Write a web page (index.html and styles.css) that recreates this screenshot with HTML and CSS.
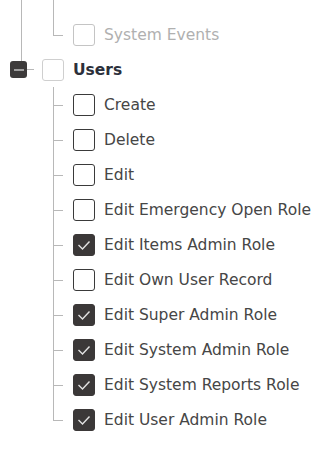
FILE: index.html
```html
<!DOCTYPE html>
<html lang="en">
<head>
<meta charset="utf-8">
<title>Permissions tree</title>
<link rel="stylesheet" href="styles.css">
</head>
<body>

<div class="tree">
  <div class="group top">
    <div class="row leaf last faded">
      <span class="box"></span>
      <span class="label">System Events</span>
    </div>
  </div>

  <div class="row node">
    <span class="toggle"><span class="minus"></span></span>
    <span class="box light"></span>
    <span class="label bold">Users</span>
  </div>

  <div class="group">
    <div class="row leaf"><span class="box"></span><span class="label">Create</span></div>
    <div class="row leaf"><span class="box"></span><span class="label">Delete</span></div>
    <div class="row leaf"><span class="box"></span><span class="label">Edit</span></div>
    <div class="row leaf"><span class="box"></span><span class="label">Edit Emergency Open Role</span></div>
    <div class="row leaf"><span class="box on"><svg viewBox="0 0 22 22"><polyline points="5.5,12 9.5,16 16.5,8.5"/></svg></span><span class="label">Edit Items Admin Role</span></div>
    <div class="row leaf"><span class="box"></span><span class="label">Edit Own User Record</span></div>
    <div class="row leaf"><span class="box on"><svg viewBox="0 0 22 22"><polyline points="5.5,12 9.5,16 16.5,8.5"/></svg></span><span class="label">Edit Super Admin Role</span></div>
    <div class="row leaf"><span class="box on"><svg viewBox="0 0 22 22"><polyline points="5.5,12 9.5,16 16.5,8.5"/></svg></span><span class="label">Edit System Admin Role</span></div>
    <div class="row leaf"><span class="box on"><svg viewBox="0 0 22 22"><polyline points="5.5,12 9.5,16 16.5,8.5"/></svg></span><span class="label">Edit System Reports Role</span></div>
    <div class="row leaf last"><span class="box on"><svg viewBox="0 0 22 22"><polyline points="5.5,12 9.5,16 16.5,8.5"/></svg></span><span class="label">Edit User Admin Role</span></div>
  </div>
</div>

</body>
</html>
```

FILE: styles.css
```css
body {
	margin: 0;
	background: #ffffff;
	font-family: "DejaVu Sans", Verdana, sans-serif;
	font-size: 15.5px;
	color: #464646;
}
.tree {
	position: relative;
}
.group {
	position: relative;
}
.top {
	padding-top: 17px;
}
/* line of the branch above, and the root line */
.top::before {
	content: "";
	position: absolute;
	left: 53px;
	top: 0;
	height: 17px;
	border-left: 1px solid #b8b8b8;
}
.top::after {
	content: "";
	position: absolute;
	left: 21px;
	top: 0;
	bottom: 0;
	border-left: 1px solid #b8b8b8;
}
.row {
	position: relative;
	height: 35px;
	display: flex;
	align-items: center;
	box-sizing: border-box;
}
.leaf {
	padding-left: 73px;
}
.leaf::before {
	content: "";
	position: absolute;
	left: 53px;
	top: 0;
	bottom: 0;
	border-left: 1px solid #b8b8b8;
}
.leaf.last::before {
	bottom: 50%;
}
.leaf::after {
	content: "";
	position: absolute;
	left: 53px;
	top: 50%;
	width: 10px;
	border-top: 1px solid #b8b8b8;
}
.node {
	padding-left: 10px;
}
.node::before {
	content: "";
	position: absolute;
	left: 21px;
	top: 0;
	height: 9px;
	border-left: 1px solid #b8b8b8;
}
.toggle {
	position: relative;
	width: 17px;
	height: 17px;
	margin-right: 15px;
	border-radius: 3px;
	background: #3d3b3b;
	display: flex;
	align-items: center;
	justify-content: center;
}
.toggle::after {
	content: "";
	position: absolute;
	left: 17px;
	top: 8px;
	width: 7px;
	border-top: 1px solid #b8b8b8;
}
.minus {
	width: 10px;
	height: 2px;
	background: #a0a0a0;
}
.box {
	width: 22px;
	height: 22px;
	box-sizing: border-box;
	border: 1.5px solid #3a3a3a;
	border-radius: 3px;
	background: #ffffff;
	margin-right: 9px;
	flex: none;
}
.box.light {
	border-color: #cfcfcf;
}
.box.on {
	background: #3b3838;
	border-color: #3b3838;
}
.box svg {
	display: block;
	width: 22px;
	height: 22px;
	margin: -1.5px;
}
.box svg polyline {
	fill: none;
	stroke: #e2e2e2;
	stroke-width: 1.4;
}
.label {
	white-space: nowrap;
}
.bold {
	font-weight: bold;
	color: #2c303b;
}
.faded .box {
	border-color: #c4c4c4;
}
.faded .label {
	color: #b0b0b0;
}
```
